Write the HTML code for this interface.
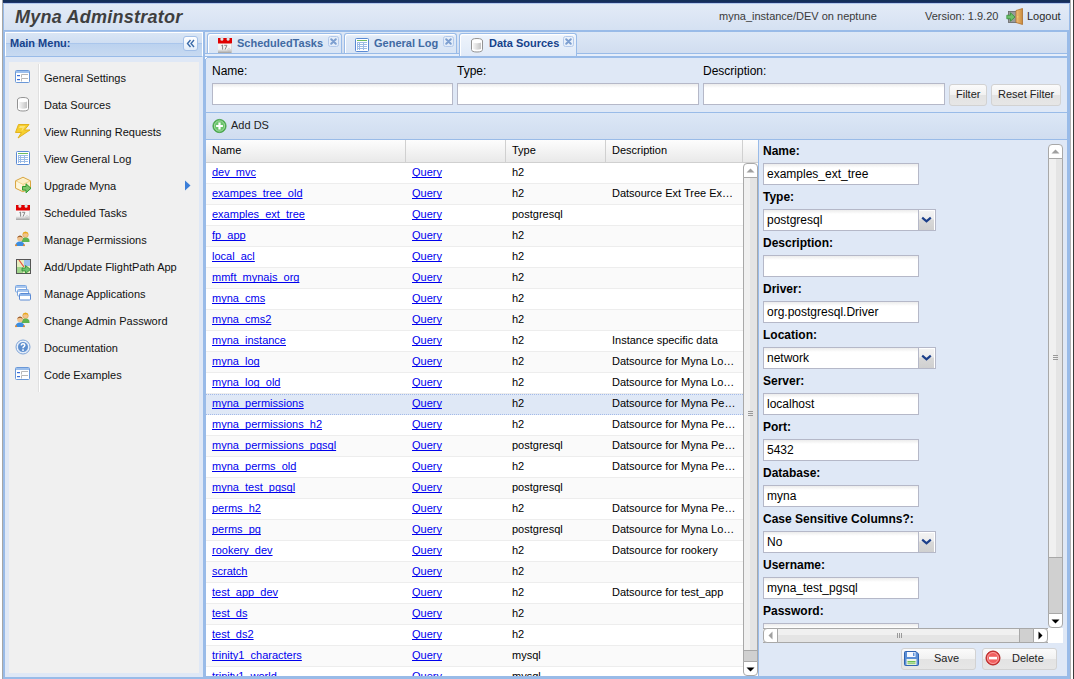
<!DOCTYPE html>
<html><head><meta charset="utf-8">
<style>
*{box-sizing:border-box;margin:0;padding:0}
html,body{width:1074px;height:679px;overflow:hidden;background:#fff;font-family:"Liberation Sans",sans-serif;font-size:11px;color:#000}
.a{position:absolute}
.t{position:absolute;white-space:nowrap;line-height:1}
.lk{color:#0000ee;text-decoration:underline;text-decoration-skip-ink:none}
.fl{font-weight:bold;font-size:12px}
.inp{position:absolute;background:#fff linear-gradient(#ececec,#fff 4px);border:1px solid #b5b8c8}
.btn{position:absolute;border:1px solid #d2d2d2;border-radius:3px;background:linear-gradient(#fbfbfb 0,#f1f1f1 50%,#e3e3e3 51%,#e6e6e6 100%)}
.sbv{position:absolute;background:linear-gradient(90deg,#f0f0f0 0,#f0f0f0 50%,#e4e4e4 50%,#e4e4e4 100%);border-left:1px solid #a8a8a8;border-right:1px solid #a8a8a8}
</style></head><body>
<div class="a" style="left:2px;top:0px;width:1px;height:679px;background:#a6a6a6"></div>
<div class="a" style="left:1070px;top:0px;width:1px;height:679px;background:#b4b4b4"></div>
<div class="a" style="left:1073px;top:0px;width:1px;height:679px;background:#3a3a3a"></div>
<div class="a" style="left:3px;top:0px;width:1067px;height:679px;background:#dfe8f6"></div>
<div class="a" style="left:3px;top:0px;width:1067px;height:3px;background:linear-gradient(#15305a 0,#15305a 66%,#2a3a80 100%)"></div>
<div class="a" style="left:3px;top:3px;width:1067px;height:28px;border:1px solid #99bbe8;border-top:1px solid #b3cbee;background:linear-gradient(#e3ebf7,#d5e1f2)"></div>
<div class="t" style="left:15px;top:8px;font-size:18px;font-weight:bold;font-style:italic;color:#3f3f3f;letter-spacing:0.25px">Myna Adminstrator</div>
<div class="t" style="left:719px;top:11px;font-size:11px;color:#3a3a3a">myna_instance/DEV on neptune</div>
<div class="t" style="left:925px;top:11px;font-size:11px;color:#3a3a3a">Version: 1.9.20</div>
<div class="a" style="left:1006px;top:8px;line-height:0"><svg width="17" height="17" viewBox="0 0 17 17"><defs><linearGradient id="door" x1="0" x2="1"><stop offset="0" stop-color="#f2c27a"/><stop offset="1" stop-color="#c98a3c"/></linearGradient></defs>
<rect x="2.5" y="3.5" width="8" height="11" fill="#9a9a9a" stroke="#666" stroke-width=".8"/>
<path d="M10 2.5L16.5 0.5V16.5L10 14.5Z" fill="url(#door)" stroke="#a8651e" stroke-width=".7"/>
<path d="M0.8 7.2H4.5V4.8L9 9L4.5 13.2V10.8H0.8Z" fill="#6cc06c" stroke="#2e8b2e" stroke-width=".7"/>
<circle cx="11.8" cy="8.8" r=".6" fill="#ffe080"/></svg></div>
<div class="t" style="left:1027px;top:11px;font-size:11px;color:#2a2a2a">Logout</div>
<div class="a" style="left:3px;top:31px;width:202px;height:648px;border:2px solid #99bbe8;border-top:1px solid #a6c2ea;background:#dfe8f6"></div>
<div class="a" style="left:5px;top:32px;width:198px;height:25px;border-bottom:1px solid #99bbe8;border-top:1px solid #fff;border-left:1px solid #fff;border-right:1px solid #fff;background:linear-gradient(#dae6f5 0px,#cfdef2 10px,#aac6ec 10px,#aac6ec 11px,#bbd2ef 11px,#c8daf1 23px)"></div>
<div class="t" style="left:10px;top:38px;font-weight:bold;color:#15428b">Main Menu:</div>
<div class="a" style="left:183px;top:36px;width:15px;height:15px;border:1px solid #a3c0e8;border-radius:3px;background:linear-gradient(#ffffff,#e2ecf9)"></div>
<div class="a" style="left:185px;top:38px;line-height:0"><svg width="11" height="11"><path d="M5.5 2L2.5 5.5L5.5 9M9 2L6 5.5L9 9" stroke="#3a6aa8" stroke-width="1.4" fill="none"/></svg></div>
<div class="a" style="left:9px;top:62px;width:190px;height:611px;background:#f0f0f0"></div>
<div class="a" style="left:38px;top:64px;width:2px;height:328px;background:#fff;border-left:1px solid #e0e0e0"></div>
<div class="a" style="left:14px;top:69px;line-height:0"><svg width="16" height="16" viewBox="0 0 16 16"><rect x="1.5" y="1.5" width="14" height="12" rx="1" fill="#fff" stroke="#6a98d8"/>
<rect x="2" y="2" width="13" height="2" fill="#9cbfec"/>
<rect x="3" y="6" width="3" height="1.2" fill="#3a6fd8"/><rect x="3" y="10" width="3" height="1.2" fill="#3a6fd8"/>
<path d="M7.5 8.5V5.5H14M7.5 12.5V9.5H14" stroke="#b8b8b8" fill="none"/></svg></div>
<div class="t" style="left:44px;top:73px;font-size:11px;color:#111">General Settings</div>
<div class="a" style="left:14px;top:96px;line-height:0"><svg width="16" height="16" viewBox="0 0 16 16"><defs><linearGradient id="cyl" x1="0" x2="1"><stop offset="0" stop-color="#f6f6f6"/><stop offset=".6" stop-color="#d8d8d8"/><stop offset="1" stop-color="#c4c4c4"/></linearGradient></defs>
<path d="M3.5 4Q3.5 1.5 9 1.5Q14.5 1.5 14.5 4V12.5Q14.5 15 9 15Q3.5 15 3.5 12.5Z" fill="#fff" stroke="#939393"/>
<path d="M5 5.2Q9 7.2 13 5.2V12Q9 13.6 5 12Z" fill="url(#cyl)"/>
<ellipse cx="9" cy="4.4" rx="4.2" ry="1.6" fill="#fff"/></svg></div>
<div class="t" style="left:44px;top:100px;font-size:11px;color:#111">Data Sources</div>
<div class="a" style="left:14px;top:123px;line-height:0"><svg width="16" height="16" viewBox="0 0 16 16"><path d="M4.5 1.5H15L10.5 7H16L4 15L7.5 9.5H1.5Z" fill="#f6cf2e" stroke="#e2b21c" stroke-width="1" stroke-linejoin="round"/>
<path d="M6 3H11.5L8 8H7.5L8.5 5H5Z" fill="#fbe27a"/></svg></div>
<div class="t" style="left:44px;top:127px;font-size:11px;color:#111">View Running Requests</div>
<div class="a" style="left:15px;top:150px;line-height:0"><svg width="16" height="16" viewBox="0 0 16 16"><rect x="1.5" y="1.5" width="13" height="13" rx="1" fill="#fff" stroke="#5a8ad4"/>
<rect x="3" y="3" width="10" height="1" fill="#6dbb5e"/>
<path d="M3 5.5H13M3 7.5H13M3 9.5H13M3 11.5H13" stroke="#9bbbe6"/>
<path d="M3.5 5.5V13M5.5 5.5V13M9.5 5.5V13" stroke="#9bbbe6"/></svg></div>
<div class="t" style="left:44px;top:154px;font-size:11px;color:#111">View General Log</div>
<div class="a" style="left:14px;top:176px;line-height:0"><svg width="18" height="17" viewBox="0 0 18 17"><path d="M9 1.2L16.5 4.8V12.2L9 15.8L1.5 12.2V4.8Z" fill="#fcefc8" stroke="#d9a642"/>
<path d="M1.5 4.8L9 8.4L16.5 4.8M9 8.4V15.8" stroke="#ecc877" fill="none" stroke-width=".8"/>
<path d="M2.5 5.8L8.5 8.8V14.5L2.5 11.6Z" fill="#fdf6dc"/>
<path d="M8.5 10.5H12V7.8L17 12.3L12 16.8V14.1H8.5Z" fill="#7cc46c" stroke="#2e9a2e" stroke-width="1"/></svg></div>
<div class="t" style="left:44px;top:181px;font-size:11px;color:#111">Upgrade Myna</div>
<div class="a" style="left:14px;top:204px;line-height:0"><svg width="16" height="16" viewBox="0 0 16 16"><defs><linearGradient id="calb" x1="0" y1="0" x2="0" y2="1"><stop offset="0" stop-color="#fff"/><stop offset=".75" stop-color="#f2f2f2"/><stop offset="1" stop-color="#a0a0a0"/></linearGradient></defs>
<rect x="2" y="1" width="14" height="15" fill="url(#calb)"/>
<rect x="2" y="1" width="14" height="5.5" fill="#e00000"/>
<rect x="4.6" y="0.6" width="2.6" height="3" rx="1.2" fill="#e8e8e8" stroke="#c8c8c8" stroke-width=".4"/><rect x="10.8" y="0.6" width="2.6" height="3" rx="1.2" fill="#e8e8e8" stroke="#c8c8c8" stroke-width=".4"/>
<path d="M5.3 8.8L6.6 8V12.6M8.2 8.3H10.9L9.1 12.6" stroke="#7a7a7a" stroke-width=".9" fill="none"/>
<circle cx="13" cy="12.8" r="1.1" fill="#fff" stroke="#aaa" stroke-width=".6"/>
<rect x="15.3" y="6.5" width=".7" height="9.5" fill="#cfcfcf"/></svg></div>
<div class="t" style="left:44px;top:208px;font-size:11px;color:#111">Scheduled Tasks</div>
<div class="a" style="left:14px;top:231px;line-height:0"><svg width="16" height="16" viewBox="0 0 16 16"><circle cx="11.5" cy="3.8" r="2.8" fill="#f2c28c" stroke="#e0a020" stroke-width=".5"/>
<path d="M8.7 3.5Q9 0.6 11.5 0.8Q14 0.6 14.3 3.5Q13 2 11.5 2.4Q10 2 8.7 3.5Z" fill="#e8a818"/>
<path d="M7.5 10Q7.5 6.5 11.5 6.5Q15.5 6.5 15.5 10V11H7.5Z" fill="#5fb34f"/>
<circle cx="6" cy="7.5" r="2.8" fill="#f2c28c"/>
<path d="M3.2 7.2Q3.5 4.4 6 4.5Q8.5 4.4 8.8 7.2Q7.5 5.8 6 6.1Q4.5 5.8 3.2 7.2Z" fill="#9b6132"/>
<path d="M1.5 15Q1.5 10.5 6 10.5Q10.5 10.5 10.5 15Z" fill="#3b8de0"/>
<circle cx="2" cy="14.2" r="1" fill="#e48a2a"/><circle cx="10" cy="14.2" r="1" fill="#e48a2a"/></svg></div>
<div class="t" style="left:44px;top:235px;font-size:11px;color:#111">Manage Permissions</div>
<div class="a" style="left:15px;top:258px;line-height:0"><svg width="16" height="16" viewBox="0 0 16 16"><rect x="1.5" y="1.5" width="14" height="14" fill="#e8eec0" stroke="#555"/>
<rect x="9" y="2" width="6" height="6" fill="#9cc0ea"/>
<rect x="2" y="9" width="6" height="6" fill="#9fd38a"/>
<path d="M4 2L9 9" stroke="#e84a3a" stroke-width="1.2"/>
<path d="M7 10H10.5V7.5L15.5 11.5L10.5 15.5V13H7Z" fill="#6cc06c" stroke="#2e8b2e" stroke-width=".8"/></svg></div>
<div class="t" style="left:44px;top:262px;font-size:11px;color:#111">Add/Update FlightPath App</div>
<div class="a" style="left:14px;top:284px;line-height:0"><svg width="18" height="17" viewBox="0 0 18 17"><rect x="1.5" y="1.5" width="11" height="6.5" rx="1" fill="#fff" stroke="#7aa6e0"/><rect x="2" y="2" width="10" height="2" fill="#a8c6ee"/>
<rect x="3.5" y="5.5" width="11" height="6.5" rx="1" fill="#fff" stroke="#7aa6e0"/><rect x="4" y="6" width="10" height="2" fill="#a8c6ee"/>
<rect x="5.5" y="9.5" width="11" height="6.5" rx="1" fill="#fff" stroke="#5a8ad4"/><rect x="6" y="10" width="10" height="2" fill="#8fb6ea"/></svg></div>
<div class="t" style="left:44px;top:289px;font-size:11px;color:#111">Manage Applications</div>
<div class="a" style="left:14px;top:312px;line-height:0"><svg width="16" height="16" viewBox="0 0 16 16"><circle cx="11.5" cy="3.8" r="2.8" fill="#f2c28c" stroke="#e0a020" stroke-width=".5"/>
<path d="M8.7 3.5Q9 0.6 11.5 0.8Q14 0.6 14.3 3.5Q13 2 11.5 2.4Q10 2 8.7 3.5Z" fill="#e8a818"/>
<path d="M7.5 10Q7.5 6.5 11.5 6.5Q15.5 6.5 15.5 10V11H7.5Z" fill="#5fb34f"/>
<circle cx="6" cy="7.5" r="2.8" fill="#f2c28c"/>
<path d="M3.2 7.2Q3.5 4.4 6 4.5Q8.5 4.4 8.8 7.2Q7.5 5.8 6 6.1Q4.5 5.8 3.2 7.2Z" fill="#9b6132"/>
<path d="M1.5 15Q1.5 10.5 6 10.5Q10.5 10.5 10.5 15Z" fill="#3b8de0"/>
<circle cx="2" cy="14.2" r="1" fill="#e48a2a"/><circle cx="10" cy="14.2" r="1" fill="#e48a2a"/></svg></div>
<div class="t" style="left:44px;top:316px;font-size:11px;color:#111">Change Admin Password</div>
<div class="a" style="left:15px;top:339px;line-height:0"><svg width="16" height="16" viewBox="0 0 16 16"><circle cx="8" cy="8" r="7" fill="#eaf1fb" stroke="#7ea4d8"/>
<circle cx="8" cy="8" r="5.5" fill="#5e8fcf" stroke="#fff" stroke-width=".8"/>
<path d="M6.3 6.5Q6.3 4.7 8 4.7Q9.8 4.7 9.8 6.3Q9.8 7.3 8.6 7.9Q8 8.3 8 9.2" stroke="#fff" stroke-width="1.5" fill="none"/>
<rect x="7.2" y="10.3" width="1.6" height="1.6" fill="#fff"/></svg></div>
<div class="t" style="left:44px;top:343px;font-size:11px;color:#111">Documentation</div>
<div class="a" style="left:14px;top:366px;line-height:0"><svg width="16" height="16" viewBox="0 0 16 16"><rect x="1.5" y="1.5" width="14" height="12" rx="1" fill="#fff" stroke="#6a98d8"/>
<rect x="2" y="2" width="13" height="2" fill="#9cbfec"/>
<rect x="3" y="6" width="3" height="1.2" fill="#3a6fd8"/><rect x="3" y="10" width="3" height="1.2" fill="#3a6fd8"/>
<path d="M7.5 8.5V5.5H14M7.5 12.5V9.5H14" stroke="#b8b8b8" fill="none"/></svg></div>
<div class="t" style="left:44px;top:370px;font-size:11px;color:#111">Code Examples</div>
<div class="a" style="left:184px;top:180px;line-height:0"><svg width="7" height="11"><path d="M1 0.5L6.5 5.5L1 10.5Z" fill="#3b7ed8"/></svg></div>
<div class="a" style="left:204px;top:31px;width:866px;height:648px;border:3px solid #99bbe8;border-left:1px solid #99bbe8;border-top:0;border-right:3px solid #99bbe8;background:#dfe8f6"></div>
<div class="a" style="left:205px;top:31px;width:862px;height:27px;background:linear-gradient(#dde8f6,#cfdcef);border-top:1px solid #99bbe8;border-bottom:2px solid #99bbe8"></div>
<div class="a" style="left:205px;top:53px;width:862px;height:1px;background:#99bbe8"></div>
<div class="a" style="left:205px;top:54px;width:862px;height:2px;background:#e6eefa"></div>
<div class="a" style="left:207px;top:33px;width:135px;height:20px;border:1px solid #99bbe8;border-bottom:0;border-radius:3px 3px 0 0;background:linear-gradient(#f2f6fc 0,#e0eaf7 3px,#d9e5f5 100%);box-shadow:inset 1px 1px 0 #fff"></div>
<div class="a" style="left:216px;top:37px;line-height:0"><svg width="16" height="16" viewBox="0 0 16 16"><defs><linearGradient id="calb" x1="0" y1="0" x2="0" y2="1"><stop offset="0" stop-color="#fff"/><stop offset=".75" stop-color="#f2f2f2"/><stop offset="1" stop-color="#a0a0a0"/></linearGradient></defs>
<rect x="2" y="1" width="14" height="15" fill="url(#calb)"/>
<rect x="2" y="1" width="14" height="5.5" fill="#e00000"/>
<rect x="4.6" y="0.6" width="2.6" height="3" rx="1.2" fill="#e8e8e8" stroke="#c8c8c8" stroke-width=".4"/><rect x="10.8" y="0.6" width="2.6" height="3" rx="1.2" fill="#e8e8e8" stroke="#c8c8c8" stroke-width=".4"/>
<path d="M5.3 8.8L6.6 8V12.6M8.2 8.3H10.9L9.1 12.6" stroke="#7a7a7a" stroke-width=".9" fill="none"/>
<circle cx="13" cy="12.8" r="1.1" fill="#fff" stroke="#aaa" stroke-width=".6"/>
<rect x="15.3" y="6.5" width=".7" height="9.5" fill="#cfcfcf"/></svg></div>
<div class="t" style="left:237px;top:38px;font-size:11px;font-weight:bold;color:#416aa3">ScheduledTasks</div>
<div class="a" style="left:328px;top:36px;line-height:0"><svg width="11" height="11" viewBox="0 0 11 11"><rect x="0.5" y="0.5" width="10" height="10" rx="2" fill="#eaf1fb" fill-opacity=".5" stroke="#b3c9ea"/>
<path d="M3.2 3.2L7.8 7.8M7.8 3.2L3.2 7.8" stroke="#7d9fd0" stroke-width="2" stroke-linecap="round"/></svg></div>
<div class="a" style="left:344px;top:33px;width:113px;height:20px;border:1px solid #99bbe8;border-bottom:0;border-radius:3px 3px 0 0;background:linear-gradient(#f2f6fc 0,#e0eaf7 3px,#d9e5f5 100%);box-shadow:inset 1px 1px 0 #fff"></div>
<div class="a" style="left:354px;top:37px;line-height:0"><svg width="16" height="16" viewBox="0 0 16 16"><rect x="1.5" y="1.5" width="13" height="13" rx="1" fill="#fff" stroke="#5a8ad4"/>
<rect x="3" y="3" width="10" height="1" fill="#6dbb5e"/>
<path d="M3 5.5H13M3 7.5H13M3 9.5H13M3 11.5H13" stroke="#9bbbe6"/>
<path d="M3.5 5.5V13M5.5 5.5V13M9.5 5.5V13" stroke="#9bbbe6"/></svg></div>
<div class="t" style="left:374px;top:38px;font-size:11px;font-weight:bold;color:#416aa3">General Log</div>
<div class="a" style="left:443px;top:36px;line-height:0"><svg width="11" height="11" viewBox="0 0 11 11"><rect x="0.5" y="0.5" width="10" height="10" rx="2" fill="#eaf1fb" fill-opacity=".5" stroke="#b3c9ea"/>
<path d="M3.2 3.2L7.8 7.8M7.8 3.2L3.2 7.8" stroke="#7d9fd0" stroke-width="2" stroke-linecap="round"/></svg></div>
<div class="a" style="left:459px;top:33px;width:118px;height:23px;border:1px solid #99bbe8;border-bottom:0;border-radius:3px 3px 0 0;background:linear-gradient(#ffffff 0,#edf3fb 2px,#e0eaf8 100%);box-shadow:inset 1px 1px 0 #fff"></div>
<div class="a" style="left:468px;top:37px;line-height:0"><svg width="16" height="16" viewBox="0 0 16 16"><defs><linearGradient id="cyl" x1="0" x2="1"><stop offset="0" stop-color="#f6f6f6"/><stop offset=".6" stop-color="#d8d8d8"/><stop offset="1" stop-color="#c4c4c4"/></linearGradient></defs>
<path d="M3.5 4Q3.5 1.5 9 1.5Q14.5 1.5 14.5 4V12.5Q14.5 15 9 15Q3.5 15 3.5 12.5Z" fill="#fff" stroke="#939393"/>
<path d="M5 5.2Q9 7.2 13 5.2V12Q9 13.6 5 12Z" fill="url(#cyl)"/>
<ellipse cx="9" cy="4.4" rx="4.2" ry="1.6" fill="#fff"/></svg></div>
<div class="t" style="left:489px;top:38px;font-size:11px;font-weight:bold;color:#15428b">Data Sources</div>
<div class="a" style="left:563px;top:36px;line-height:0"><svg width="11" height="11" viewBox="0 0 11 11"><rect x="0.5" y="0.5" width="10" height="10" rx="2" fill="#eaf1fb" fill-opacity=".5" stroke="#b3c9ea"/>
<path d="M3.2 3.2L7.8 7.8M7.8 3.2L3.2 7.8" stroke="#7d9fd0" stroke-width="2" stroke-linecap="round"/></svg></div>
<div class="a" style="left:205px;top:58px;width:862px;height:55px;border-bottom:1px solid #99bbe8;background:#dfe8f6"></div>
<div class="t" style="left:212px;top:65px;font-size:12px;">Name:</div>
<div class="t" style="left:457px;top:65px;font-size:12px;">Type:</div>
<div class="t" style="left:703px;top:65px;font-size:12px;">Description:</div>
<div class="inp" style="left:212px;top:83px;width:241px;height:22px"></div>
<div class="inp" style="left:457px;top:83px;width:242px;height:22px"></div>
<div class="inp" style="left:703px;top:83px;width:242px;height:22px"></div>
<div class="btn" style="left:949px;top:84px;width:38px;height:22px"></div>
<div class="t" style="left:956px;top:89px;font-size:11px;color:#222">Filter</div>
<div class="btn" style="left:991px;top:84px;width:70px;height:22px"></div>
<div class="t" style="left:998px;top:89px;font-size:11px;color:#222">Reset Filter</div>
<div class="a" style="left:205px;top:113px;width:862px;height:27px;background:linear-gradient(#dce7f6,#d0ddf0);border-bottom:1px solid #99bbe8"></div>
<div class="a" style="left:211px;top:118px;line-height:0"><svg width="16" height="16" viewBox="0 0 16 16"><circle cx="8.5" cy="8" r="6.6" fill="#4cae4c" stroke="#3a9a3a" stroke-width=".8"/>
<circle cx="8.5" cy="8" r="5.2" fill="#6cc46c" stroke="#bfe8bf" stroke-width=".7"/>
<path d="M8.5 4.6V11.4M5.1 8H11.9" stroke="#fff" stroke-width="2.2"/></svg></div>
<div class="t" style="left:231px;top:120px;font-size:11px;color:#222">Add DS</div>
<div class="a" style="left:205px;top:58px;width:1px;height:618px;background:#99bbe8"></div>
<div class="a" style="left:205px;top:57px;width:2px;height:2px;background:#fff"></div>
<div class="a" style="left:206px;top:58px;width:1px;height:1px;background:#a8c4ec"></div>
<div class="a" style="left:206px;top:140px;width:552px;height:536px;background:#fff"></div>
<div class="a" style="left:206px;top:140px;width:552px;height:23px;background:linear-gradient(#fdfdfd 0,#f1f1f1 60%,#e9e9e9 100%);border-bottom:1px solid #d0d0d0"></div>
<div class="a" style="left:405px;top:140px;width:1px;height:22px;background:#d0d0d0"></div>
<div class="a" style="left:505px;top:140px;width:1px;height:22px;background:#d0d0d0"></div>
<div class="a" style="left:605px;top:140px;width:1px;height:22px;background:#d0d0d0"></div>
<div class="a" style="left:742px;top:140px;width:1px;height:22px;background:#d0d0d0"></div>
<div class="t" style="left:212px;top:145px;font-size:11px;">Name</div>
<div class="t" style="left:512px;top:145px;font-size:11px;">Type</div>
<div class="t" style="left:612px;top:145px;font-size:11px;">Description</div>
<div class="a" style="left:206px;top:163px;width:537px;height:513px;overflow:hidden">
<div class="a" style="left:0;top:0px;width:537px;height:21px;background:#fff;border-bottom:1px solid #ededed;"></div>
<div class="t lk" style="left:6px;top:4px">dev_mvc</div>
<div class="t lk" style="left:206px;top:4px">Query</div>
<div class="t" style="left:306px;top:4px">h2</div>
<div class="a" style="left:0;top:21px;width:537px;height:21px;background:#fafafa;border-bottom:1px solid #ededed;"></div>
<div class="t lk" style="left:6px;top:25px">exampes_tree_old</div>
<div class="t lk" style="left:206px;top:25px">Query</div>
<div class="t" style="left:306px;top:25px">h2</div>
<div class="t" style="left:406px;top:25px">Datsource Ext Tree Ex&hellip;</div>
<div class="a" style="left:0;top:42px;width:537px;height:21px;background:#fff;border-bottom:1px solid #ededed;"></div>
<div class="t lk" style="left:6px;top:46px">examples_ext_tree</div>
<div class="t lk" style="left:206px;top:46px">Query</div>
<div class="t" style="left:306px;top:46px">postgresql</div>
<div class="a" style="left:0;top:63px;width:537px;height:21px;background:#fafafa;border-bottom:1px solid #ededed;"></div>
<div class="t lk" style="left:6px;top:67px">fp_app</div>
<div class="t lk" style="left:206px;top:67px">Query</div>
<div class="t" style="left:306px;top:67px">h2</div>
<div class="a" style="left:0;top:84px;width:537px;height:21px;background:#fff;border-bottom:1px solid #ededed;"></div>
<div class="t lk" style="left:6px;top:88px">local_acl</div>
<div class="t lk" style="left:206px;top:88px">Query</div>
<div class="t" style="left:306px;top:88px">h2</div>
<div class="a" style="left:0;top:105px;width:537px;height:21px;background:#fafafa;border-bottom:1px solid #ededed;"></div>
<div class="t lk" style="left:6px;top:109px">mmft_mynajs_org</div>
<div class="t lk" style="left:206px;top:109px">Query</div>
<div class="t" style="left:306px;top:109px">h2</div>
<div class="a" style="left:0;top:126px;width:537px;height:21px;background:#fff;border-bottom:1px solid #ededed;"></div>
<div class="t lk" style="left:6px;top:130px">myna_cms</div>
<div class="t lk" style="left:206px;top:130px">Query</div>
<div class="t" style="left:306px;top:130px">h2</div>
<div class="a" style="left:0;top:147px;width:537px;height:21px;background:#fafafa;border-bottom:1px solid #ededed;"></div>
<div class="t lk" style="left:6px;top:151px">myna_cms2</div>
<div class="t lk" style="left:206px;top:151px">Query</div>
<div class="t" style="left:306px;top:151px">h2</div>
<div class="a" style="left:0;top:168px;width:537px;height:21px;background:#fff;border-bottom:1px solid #ededed;"></div>
<div class="t lk" style="left:6px;top:172px">myna_instance</div>
<div class="t lk" style="left:206px;top:172px">Query</div>
<div class="t" style="left:306px;top:172px">h2</div>
<div class="t" style="left:406px;top:172px">Instance specific data</div>
<div class="a" style="left:0;top:189px;width:537px;height:21px;background:#fafafa;border-bottom:1px solid #ededed;"></div>
<div class="t lk" style="left:6px;top:193px">myna_log</div>
<div class="t lk" style="left:206px;top:193px">Query</div>
<div class="t" style="left:306px;top:193px">h2</div>
<div class="t" style="left:406px;top:193px">Datsource for Myna Lo&hellip;</div>
<div class="a" style="left:0;top:210px;width:537px;height:21px;background:#fff;border-bottom:1px solid #ededed;"></div>
<div class="t lk" style="left:6px;top:214px">myna_log_old</div>
<div class="t lk" style="left:206px;top:214px">Query</div>
<div class="t" style="left:306px;top:214px">h2</div>
<div class="t" style="left:406px;top:214px">Datsource for Myna Lo&hellip;</div>
<div class="a" style="left:0;top:231px;width:537px;height:21px;background:#dfe8f6;border-top:1px dotted #a3bae9;border-bottom:1px dotted #a3bae9;"></div>
<div class="t lk" style="left:6px;top:235px">myna_permissions</div>
<div class="t lk" style="left:206px;top:235px">Query</div>
<div class="t" style="left:306px;top:235px">h2</div>
<div class="t" style="left:406px;top:235px">Datsource for Myna Pe&hellip;</div>
<div class="a" style="left:0;top:252px;width:537px;height:21px;background:#fff;border-bottom:1px solid #ededed;"></div>
<div class="t lk" style="left:6px;top:256px">myna_permissions_h2</div>
<div class="t lk" style="left:206px;top:256px">Query</div>
<div class="t" style="left:306px;top:256px">h2</div>
<div class="t" style="left:406px;top:256px">Datsource for Myna Pe&hellip;</div>
<div class="a" style="left:0;top:273px;width:537px;height:21px;background:#fafafa;border-bottom:1px solid #ededed;"></div>
<div class="t lk" style="left:6px;top:277px">myna_permissions_pgsql</div>
<div class="t lk" style="left:206px;top:277px">Query</div>
<div class="t" style="left:306px;top:277px">postgresql</div>
<div class="t" style="left:406px;top:277px">Datsource for Myna Pe&hellip;</div>
<div class="a" style="left:0;top:294px;width:537px;height:21px;background:#fff;border-bottom:1px solid #ededed;"></div>
<div class="t lk" style="left:6px;top:298px">myna_perms_old</div>
<div class="t lk" style="left:206px;top:298px">Query</div>
<div class="t" style="left:306px;top:298px">h2</div>
<div class="t" style="left:406px;top:298px">Datsource for Myna Pe&hellip;</div>
<div class="a" style="left:0;top:315px;width:537px;height:21px;background:#fafafa;border-bottom:1px solid #ededed;"></div>
<div class="t lk" style="left:6px;top:319px">myna_test_pgsql</div>
<div class="t lk" style="left:206px;top:319px">Query</div>
<div class="t" style="left:306px;top:319px">postgresql</div>
<div class="a" style="left:0;top:336px;width:537px;height:21px;background:#fff;border-bottom:1px solid #ededed;"></div>
<div class="t lk" style="left:6px;top:340px">perms_h2</div>
<div class="t lk" style="left:206px;top:340px">Query</div>
<div class="t" style="left:306px;top:340px">h2</div>
<div class="t" style="left:406px;top:340px">Datsource for Myna Pe&hellip;</div>
<div class="a" style="left:0;top:357px;width:537px;height:21px;background:#fafafa;border-bottom:1px solid #ededed;"></div>
<div class="t lk" style="left:6px;top:361px">perms_pg</div>
<div class="t lk" style="left:206px;top:361px">Query</div>
<div class="t" style="left:306px;top:361px">postgresql</div>
<div class="t" style="left:406px;top:361px">Datsource for Myna Lo&hellip;</div>
<div class="a" style="left:0;top:378px;width:537px;height:21px;background:#fff;border-bottom:1px solid #ededed;"></div>
<div class="t lk" style="left:6px;top:382px">rookery_dev</div>
<div class="t lk" style="left:206px;top:382px">Query</div>
<div class="t" style="left:306px;top:382px">h2</div>
<div class="t" style="left:406px;top:382px">Datsource for rookery</div>
<div class="a" style="left:0;top:399px;width:537px;height:21px;background:#fafafa;border-bottom:1px solid #ededed;"></div>
<div class="t lk" style="left:6px;top:403px">scratch</div>
<div class="t lk" style="left:206px;top:403px">Query</div>
<div class="t" style="left:306px;top:403px">h2</div>
<div class="a" style="left:0;top:420px;width:537px;height:21px;background:#fff;border-bottom:1px solid #ededed;"></div>
<div class="t lk" style="left:6px;top:424px">test_app_dev</div>
<div class="t lk" style="left:206px;top:424px">Query</div>
<div class="t" style="left:306px;top:424px">h2</div>
<div class="t" style="left:406px;top:424px">Datsource for test_app</div>
<div class="a" style="left:0;top:441px;width:537px;height:21px;background:#fafafa;border-bottom:1px solid #ededed;"></div>
<div class="t lk" style="left:6px;top:445px">test_ds</div>
<div class="t lk" style="left:206px;top:445px">Query</div>
<div class="t" style="left:306px;top:445px">h2</div>
<div class="a" style="left:0;top:462px;width:537px;height:21px;background:#fff;border-bottom:1px solid #ededed;"></div>
<div class="t lk" style="left:6px;top:466px">test_ds2</div>
<div class="t lk" style="left:206px;top:466px">Query</div>
<div class="t" style="left:306px;top:466px">h2</div>
<div class="a" style="left:0;top:483px;width:537px;height:21px;background:#fafafa;border-bottom:1px solid #ededed;"></div>
<div class="t lk" style="left:6px;top:487px">trinity1_characters</div>
<div class="t lk" style="left:206px;top:487px">Query</div>
<div class="t" style="left:306px;top:487px">mysql</div>
<div class="a" style="left:0;top:504px;width:537px;height:21px;background:#fff;border-bottom:1px solid #ededed;"></div>
<div class="t lk" style="left:6px;top:508px">trinity1_world</div>
<div class="t lk" style="left:206px;top:508px">Query</div>
<div class="t" style="left:306px;top:508px">mysql</div>
</div>
<div class="sbv" style="left:743px;top:177px;width:15px;height:485px"></div>
<div class="a" style="left:744px;top:650px;width:13px;height:11px;background:#d0d0d0;border-top:1px solid #a8a8a8"></div>
<div class="a" style="left:743px;top:163px;width:15px;height:15px;background:#fff;border:1px solid #a8a8a8;border-radius:4px 4px 0 0"></div>
<div class="a" style="left:746px;top:168px;line-height:0"><svg width="9" height="5"><path d="M0.5 4.5L4.5 0.5L8.5 4.5Z" fill="#a0a0a0"/></svg></div>
<div class="a" style="left:743px;top:661px;width:15px;height:15px;background:#fff;border:1px solid #a8a8a8;border-radius:0 0 4px 4px"></div>
<div class="a" style="left:746px;top:667px;line-height:0"><svg width="9" height="5"><path d="M0.5 0.5L4.5 4.5L8.5 0.5Z" fill="#000"/></svg></div>
<div class="a" style="left:747px;top:410px;line-height:0"><svg width="7" height="7"><path d="M1 1.5H6M1 3.5H6M1 5.5H6" stroke="#999"/></svg></div>
<div class="a" style="left:758px;top:139px;width:309px;height:537px;border-left:1px solid #99bbe8;border-top:1px solid #99bbe8;background:#dfe8f6"></div>
<div class="a" style="left:759px;top:140px;width:289px;height:488px;overflow:hidden">
<div class="t fl" style="left:4px;top:5px">Name:</div>
<div class="inp" style="left:4px;top:23px;width:156px;height:22px"></div>
<div class="t" style="left:8px;top:28px;font-size:12px">examples_ext_tree</div>
<div class="t fl" style="left:4px;top:51px">Type:</div>
<div class="inp" style="left:4px;top:69px;width:156px;height:22px"></div>
<div class="t" style="left:8px;top:74px;font-size:12px">postgresql</div>
<div class="a" style="left:159px;top:69px;width:18px;height:22px;border:1px solid #b5b8c8;background:linear-gradient(#f4f4f4 0,#ececec 45%,#d8d8d8 50%,#d0d0d0 100%);box-shadow:inset -1px 1px 0 #fff"></div>
<div class="a" style="left:161px;top:72px;line-height:0"><svg width="13" height="16" viewBox="0 0 13 16"><path d="M2.2 5.6L6.5 9.4L10.8 5.6" stroke="#1c3f8a" stroke-width="2.2" fill="none"/></svg></div>
<div class="t fl" style="left:4px;top:97px">Description:</div>
<div class="inp" style="left:4px;top:115px;width:156px;height:22px"></div>
<div class="t fl" style="left:4px;top:143px">Driver:</div>
<div class="inp" style="left:4px;top:161px;width:156px;height:22px"></div>
<div class="t" style="left:8px;top:166px;font-size:12px">org.postgresql.Driver</div>
<div class="t fl" style="left:4px;top:189px">Location:</div>
<div class="inp" style="left:4px;top:207px;width:156px;height:22px"></div>
<div class="t" style="left:8px;top:212px;font-size:12px">network</div>
<div class="a" style="left:159px;top:207px;width:18px;height:22px;border:1px solid #b5b8c8;background:linear-gradient(#f4f4f4 0,#ececec 45%,#d8d8d8 50%,#d0d0d0 100%);box-shadow:inset -1px 1px 0 #fff"></div>
<div class="a" style="left:161px;top:210px;line-height:0"><svg width="13" height="16" viewBox="0 0 13 16"><path d="M2.2 5.6L6.5 9.4L10.8 5.6" stroke="#1c3f8a" stroke-width="2.2" fill="none"/></svg></div>
<div class="t fl" style="left:4px;top:235px">Server:</div>
<div class="inp" style="left:4px;top:253px;width:156px;height:22px"></div>
<div class="t" style="left:8px;top:258px;font-size:12px">localhost</div>
<div class="t fl" style="left:4px;top:281px">Port:</div>
<div class="inp" style="left:4px;top:299px;width:156px;height:22px"></div>
<div class="t" style="left:8px;top:304px;font-size:12px">5432</div>
<div class="t fl" style="left:4px;top:327px">Database:</div>
<div class="inp" style="left:4px;top:345px;width:156px;height:22px"></div>
<div class="t" style="left:8px;top:350px;font-size:12px">myna</div>
<div class="t fl" style="left:4px;top:373px">Case Sensitive Columns?:</div>
<div class="inp" style="left:4px;top:391px;width:156px;height:22px"></div>
<div class="t" style="left:8px;top:396px;font-size:12px">No</div>
<div class="a" style="left:159px;top:391px;width:18px;height:22px;border:1px solid #b5b8c8;background:linear-gradient(#f4f4f4 0,#ececec 45%,#d8d8d8 50%,#d0d0d0 100%);box-shadow:inset -1px 1px 0 #fff"></div>
<div class="a" style="left:161px;top:394px;line-height:0"><svg width="13" height="16" viewBox="0 0 13 16"><path d="M2.2 5.6L6.5 9.4L10.8 5.6" stroke="#1c3f8a" stroke-width="2.2" fill="none"/></svg></div>
<div class="t fl" style="left:4px;top:419px">Username:</div>
<div class="inp" style="left:4px;top:437px;width:156px;height:22px"></div>
<div class="t" style="left:8px;top:442px;font-size:12px">myna_test_pgsql</div>
<div class="t fl" style="left:4px;top:465px">Password:</div>
<div class="inp" style="left:4px;top:483px;width:156px;height:22px"></div>
</div>
<div class="sbv" style="left:1048px;top:158px;width:15px;height:456px"></div>
<div class="a" style="left:1049px;top:557px;width:13px;height:57px;background:#d0d0d0;border-top:1px solid #a8a8a8"></div>
<div class="a" style="left:1048px;top:144px;width:15px;height:15px;background:#fff;border:1px solid #a8a8a8;border-radius:4px 4px 0 0"></div>
<div class="a" style="left:1051px;top:149px;line-height:0"><svg width="9" height="5"><path d="M0.5 4.5L4.5 0.5L8.5 4.5Z" fill="#a0a0a0"/></svg></div>
<div class="a" style="left:1048px;top:613px;width:15px;height:15px;background:#fff;border:1px solid #a8a8a8;border-radius:0 0 4px 4px"></div>
<div class="a" style="left:1051px;top:619px;line-height:0"><svg width="9" height="5"><path d="M0.5 0.5L4.5 4.5L8.5 0.5Z" fill="#000"/></svg></div>
<div class="a" style="left:1052px;top:354px;line-height:0"><svg width="7" height="7"><path d="M1 1.5H6M1 3.5H6M1 5.5H6" stroke="#999"/></svg></div>
<div class="a" style="left:763px;top:628px;width:285px;height:15px;background:linear-gradient(#f0f0f0 0,#f0f0f0 50%,#e4e4e4 50%);border-top:1px solid #a8a8a8;border-bottom:1px solid #a8a8a8"></div>
<div class="a" style="left:1019px;top:629px;width:14px;height:13px;background:#d0d0d0;border-left:1px solid #a8a8a8"></div>
<div class="a" style="left:763px;top:628px;width:15px;height:15px;background:#fff;border:1px solid #a8a8a8;border-radius:4px 0 0 4px"></div>
<div class="a" style="left:768px;top:631px;line-height:0"><svg width="5" height="9"><path d="M4.5 0.5L0.5 4.5L4.5 8.5Z" fill="#a0a0a0"/></svg></div>
<div class="a" style="left:1033px;top:628px;width:15px;height:15px;background:#fff;border:1px solid #a8a8a8;border-radius:0 4px 4px 0"></div>
<div class="a" style="left:1038px;top:631px;line-height:0"><svg width="5" height="9"><path d="M0.5 0.5L4.5 4.5L0.5 8.5Z" fill="#000"/></svg></div>
<div class="a" style="left:896px;top:632px;line-height:0"><svg width="7" height="7"><path d="M1.5 1V6M3.5 1V6M5.5 1V6" stroke="#999"/></svg></div>
<div class="a" style="left:1048px;top:628px;width:15px;height:15px;background:#fff"></div>
<div class="btn" style="left:901px;top:648px;width:75px;height:22px"></div>
<div class="a" style="left:903px;top:650px;line-height:0"><svg width="16" height="16" viewBox="0 0 16 16"><path d="M1.5 2.5Q1.5 1.5 2.5 1.5H13L15.5 4V14.5Q15.5 15.5 14.5 15.5H2.5Q1.5 15.5 1.5 14.5Z" fill="#5b8fd6" stroke="#2f63b0"/>
<rect x="4" y="2" width="8.5" height="5" fill="#f4f8ff"/><rect x="10" y="2.7" width="1.5" height="3.3" fill="#5b8fd6"/>
<rect x="3.5" y="9" width="10" height="6" fill="#f0f6e8"/><rect x="4.5" y="11" width="8" height="1.5" fill="#6cbf50"/><rect x="4.5" y="13" width="8" height="1.2" fill="#9ad080"/></svg></div>
<div class="t" style="left:934px;top:653px;font-size:11px;color:#222">Save</div>
<div class="btn" style="left:982px;top:648px;width:75px;height:22px"></div>
<div class="a" style="left:985px;top:650px;line-height:0"><svg width="16" height="16" viewBox="0 0 16 16"><circle cx="8" cy="8" r="7" fill="#e04040" stroke="#b02020"/>
<circle cx="8" cy="8" r="5.5" fill="#f06060" stroke="#fbb" stroke-width=".8"/>
<rect x="4" y="6.8" width="8" height="2.6" fill="#fff"/></svg></div>
<div class="t" style="left:1012px;top:653px;font-size:11px;color:#222">Delete</div>
</body></html>
